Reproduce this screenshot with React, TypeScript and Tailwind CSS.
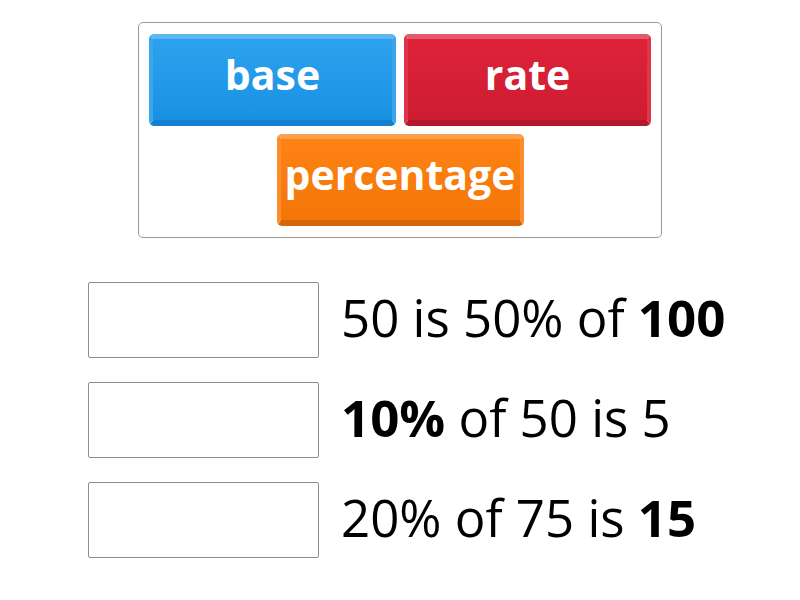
const tiles = [
  {
    label: "base",
    cls: "border-t-[#5cb6f1] border-x-[#3ba6ee] border-b-[#1381cf] bg-gradient-to-b from-[#2ca2ee] to-[#1991e2]",
  },
  {
    label: "rate",
    cls: "border-t-[#e45a69] border-x-[#de3549] border-b-[#b3182b] bg-gradient-to-b from-[#de2339] to-[#cd1c31]",
  },
  {
    label: "percentage",
    cls: "border-t-[#fca04f] border-x-[#fb8d2c] border-b-[#d6660a] bg-gradient-to-b from-[#fe8214] to-[#f37607]",
  },
];

const rows = [
  { parts: [{ t: "50 is 50% of ", b: false }, { t: "100", b: true }] },
  { parts: [{ t: "10%", b: true }, { t: " of 50 is 5", b: false }] },
  { parts: [{ t: "20% of 75 is ", b: false }, { t: "15", b: true }] },
];

function Tile({ label, cls }: { label: string; cls: string }) {
  return (
    <div
      className={`w-[247px] h-[92px] rounded-[5px] border-x-[4px] border-t-[5px] border-b-[6px] flex items-center justify-center text-white font-bold text-[41px] leading-none pb-[10px] whitespace-nowrap ${cls}`}
    >
      {label}
    </div>
  );
}

export default function App() {
  return (
    <div
      className="w-[800px] h-[600px] bg-white flex flex-col"
      style={{ fontFamily: '"Open Sans", "Noto Sans", sans-serif' }}
    >
      <div className="mt-[22px] ml-[138px] w-[524px] h-[216px] border border-[#9a9a9a] rounded-[5px] pt-[11px] px-[10px] flex flex-col items-center gap-[8px]">
        <div className="flex gap-[8px]">
          <Tile {...tiles[0]} />
          <Tile {...tiles[1]} />
        </div>
        <Tile {...tiles[2]} />
      </div>

      <div className="mt-[44px] ml-[88px] flex flex-col gap-[24px]">
        {rows.map((r, i) => (
          <div key={i} className="flex items-center gap-[22px]">
            <div className="w-[231px] h-[76px] border border-[#8e8e8e] rounded-[2px] bg-white" />
            <div className="text-[51px] leading-none text-black whitespace-nowrap pb-[6px]">
              {r.parts.map((p, j) => (
                <span key={j} className={p.b ? "font-bold" : "font-normal"}>
                  {p.t}
                </span>
              ))}
            </div>
          </div>
        ))}
      </div>
    </div>
  );
}
